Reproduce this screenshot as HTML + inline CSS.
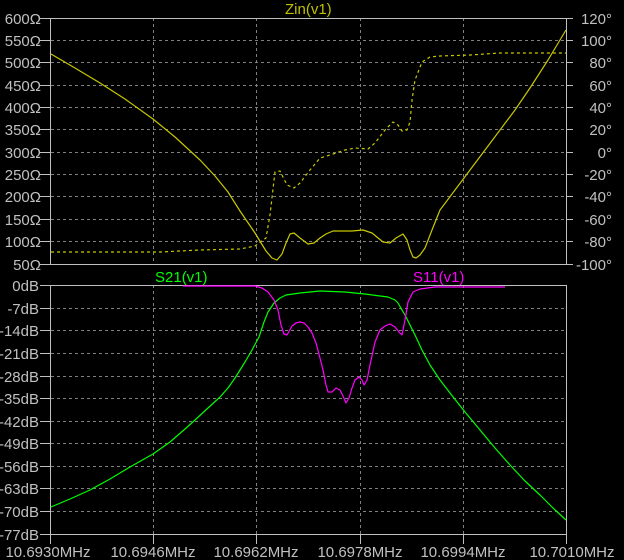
<!DOCTYPE html>
<html><head><style>
html,body{margin:0;padding:0;background:#000;width:624px;height:560px;overflow:hidden}
svg{display:block}
text{font-family:"Liberation Sans",sans-serif;font-size:15px}
</style></head><body>
<svg width="624" height="560" viewBox="0 0 624 560">
<rect width="624" height="560" fill="#000"/>
<g stroke="#808080" stroke-width="1" stroke-dasharray="3,3" fill="none">
<path d="M51 40.5H566M51 62.5H566M51 85.5H566M51 107.5H566M51 129.5H566M51 152.5H566M51 174.5H566M51 196.5H566M51 219.5H566M51 241.5H566"/>
<path d="M51 308.5H566M51 330.5H566M51 353.5H566M51 376.5H566M51 398.5H566M51 421.5H566M51 443.5H566M51 466.5H566M51 488.5H566M51 511.5H566"/>
<path d="M153.5 18V264M256.5 18V264M360.5 18V264M463.5 18V264M153.5 285V534M256.5 285V534M360.5 285V534M463.5 285V534"/>
</g>
<g stroke="#c0c0c0" stroke-width="1" fill="none">
<path d="M40 18.5H566.5V264.5H50.5V18.5"/>
<path d="M50.5 285.5H566.5V534.5H50.5Z"/>
<path d="M40 40.5H50M40 62.5H50M40 85.5H50M40 107.5H50M40 129.5H50M40 152.5H50M40 174.5H50M40 196.5H50M40 219.5H50M40 241.5H50M40 264.5H50"/>
<path d="M566 18.5H573M566 40.5H573M566 62.5H573M566 85.5H573M566 107.5H573M566 129.5H573M566 152.5H573M566 174.5H573M566 196.5H573M566 219.5H573M566 241.5H573M566 264.5H573"/>
<path d="M40 285.5H50M40 308.5H50M40 330.5H50M40 353.5H50M40 376.5H50M40 398.5H50M40 421.5H50M40 443.5H50M40 466.5H50M40 488.5H50M40 511.5H50M40 534.5H50"/>
<path d="M50.5 534V544M153.5 534V544M256.5 534V544M360.5 534V544M463.5 534V544M566.5 534V544"/>
</g>
<g fill="#c0c0c0" text-anchor="end">
<text x="41" y="24">600Ω</text><text x="41" y="46">550Ω</text><text x="41" y="68">500Ω</text><text x="41" y="91">450Ω</text><text x="41" y="113">400Ω</text><text x="41" y="135">350Ω</text><text x="41" y="158">300Ω</text><text x="41" y="180">250Ω</text><text x="41" y="202">200Ω</text><text x="41" y="225">150Ω</text><text x="41" y="247">100Ω</text><text x="41" y="270">50Ω</text>
<text x="39" y="291">0dB</text><text x="39" y="314">-7dB</text><text x="39" y="336">-14dB</text><text x="39" y="359">-21dB</text><text x="39" y="382">-28dB</text><text x="39" y="404">-35dB</text><text x="39" y="427">-42dB</text><text x="39" y="449">-49dB</text><text x="39" y="472">-56dB</text><text x="39" y="494">-63dB</text><text x="39" y="517">-70dB</text><text x="39" y="540">-77dB</text>
<text x="612" y="24">120°</text><text x="612" y="46">100°</text><text x="612" y="68">80°</text><text x="612" y="91">60°</text><text x="612" y="113">40°</text><text x="612" y="135">20°</text><text x="612" y="158">0°</text><text x="612" y="180">-20°</text><text x="612" y="202">-40°</text><text x="612" y="225">-60°</text><text x="612" y="247">-80°</text><text x="612" y="270">-100°</text>
</g>
<g fill="#c0c0c0" text-anchor="middle">
<text x="48" y="557">10.6930MHz</text><text x="153" y="557">10.6946MHz</text><text x="256" y="557">10.6962MHz</text><text x="360" y="557">10.6978MHz</text><text x="463" y="557">10.6994MHz</text><text x="572" y="557">10.7010MHz</text>
</g>
<text x="285" y="14" fill="#c0c000">Zin(v1)</text>
<text x="155" y="282" fill="#00ff00">S21(v1)</text>
<text x="413" y="282" fill="#ff00ff">S11(v1)</text>
<g fill="none" stroke-width="1.2" stroke-linejoin="round">
<path stroke="#c8c800" d="M51 54L75 68L100 83L125 99L153 119L175 137L200 160L215 176L228 192L240 211L255 233L266 251L272 258L277 260L282 254L286 243L290 234L294 233L300 238L308 244L314 243L320 238L326 234L333 231L352 231L363 230L372 233L383 242L390 243L396 238L403 234L407 240L410 250L413 257L416 258L420 255L425 248L432 230L440 210L455 190L470 170L485 150L500 130L515 110L530 88L548 60L566 30"/>
<path stroke="#c8c800" stroke-dasharray="3,3" d="M51 252L160 252L200 250L240 249L255 246L266 238L270 215L275 172L280 171L287 185L294 188L300 183L310 170L320 158L330 155L345 150L355 148L368 149L375 143L385 130L393 122L398 125L402 131L407 130L410 122L412 100L415 80L422 62L430 57L440 56L470 55L500 53L566 53"/>
<path stroke="#00ff00" d="M51 507L70 499L90 490L110 479L130 467L153 454L170 442L185 429L195 420L208 408L220 397L228 388L235 378L245 362L252 350L259 337L264 322L268 312L274 303L280 298L286 295L300 293L320 291L345 292L365 294L388 297L395 300L398 303L402 310L405 315L410 325L415 335L422 350L430 365L440 380L450 393L465 412L480 430L495 448L510 465L525 481L540 495L553 508L566 520"/>
<path stroke="#ff00ff" d="M183 286L255 286L262 288L268 292L274 300L278 310L281 325L284 334L287 335L292 326L296 323L300 322L304 323L308 327L312 333L316 343L320 358L323 370L326 385L328 392L332 392L336 388L340 390L343 396L346 403L349 398L352 388L355 380L359 377L362 380L364 385L367 380L370 365L375 342L380 330L385 326L390 324L395 327L399 332L402 335L405 320L408 302L413 292L420 289L435 287L505 287"/>
</g>
</svg>
</body></html>
